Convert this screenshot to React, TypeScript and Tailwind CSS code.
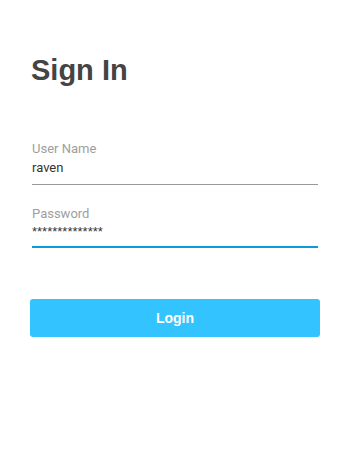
export default function App() {
  return (
    <div className="w-[350px] h-[450px] bg-white px-[30px] pt-[50px]" style={{ fontFamily: '"Liberation Sans", Arial, sans-serif' }}>
      <h1 className="text-[29px] leading-[40px] font-bold text-[#444444] pl-[1px]">Sign In</h1>
      <div className="mt-[51px] px-[2px]">
        <div className="text-[13px] leading-[15px] text-[#9e9e9e]" style={{ fontFamily: 'Roboto, sans-serif' }}>User Name</div>
        <div className="text-[13px] leading-[18px] text-[#333333] mt-[3px]" style={{ fontFamily: 'Roboto, sans-serif' }}>raven</div>
        <div className="mt-[7px] h-px bg-[#999999]" />
        <div className="mt-[21px] text-[13px] leading-[15px] text-[#9e9e9e]" style={{ fontFamily: 'Roboto, sans-serif' }}>Password</div>
        <div className="text-[13px] leading-[18px] text-[#333333] mt-[2px]">**************</div>
        <div className="mt-[5px] h-[2px] bg-[#0a9bd8]" />
      </div>
      <button className="mt-[51px] w-full h-[38px] rounded-[3px] bg-[#33c3ff] text-white font-bold text-[14px]">Login</button>
    </div>
  );
}
